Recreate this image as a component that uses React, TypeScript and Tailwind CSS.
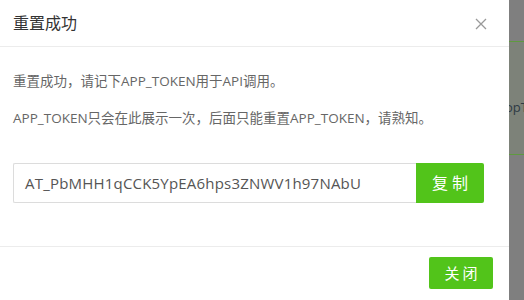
import React from "react";

const App = () => {
  const token = "AT_PbMHH1qCCK5YpEA6hps3ZNWV1h97NAbU";

  return (
    <div
      className="flex w-[524px] h-[300px] overflow-hidden bg-white"
      style={{ fontFamily: '"Open Sans", "Noto Sans CJK SC", sans-serif' }}
    >
      {/* modal */}
      <div className="w-[509px] shrink-0 flex flex-col bg-white">
        <div className="h-[47px] flex items-center justify-between pl-[13px] pr-[22px] border-b border-[#ececec]">
          <span className="text-[16px] text-[#333]">重置成功</span>
          <svg width="12" height="12" viewBox="0 0 12 12" className="mt-[1px]">
            <path d="M1 1 L11 11 M11 1 L1 11" stroke="#999" strokeWidth="1.3" />
          </svg>
        </div>

        <div className="h-[200px] pl-[13px] pt-[24px] border-b border-[#ececec]">
          <div className="text-[13.5px] leading-[20px] text-[#666]">
            <p>重置成功，请记下APP_TOKEN用于API调用。</p>
            <p className="mt-[17px]">APP_TOKEN只会在此展示一次，后面只能重置APP_TOKEN，请熟知。</p>
          </div>
          <div className="flex mt-[35px] w-[471px] h-[40px]">
            <div className="flex-1 flex items-center border border-[#dcdcdc] border-r-0 rounded-l-[2px] pl-[11px] text-[15px] text-[#555] tracking-[0.2px]">
              {token}
            </div>
            <button className="w-[68px] bg-[#52c41a] text-white text-[16px] tracking-[4px] pl-[4px] rounded-r-[2px]">
              复制
            </button>
          </div>
        </div>

        <div className="flex justify-end pr-[16px] pt-[10px]">
          <button className="w-[64px] h-[32px] bg-[#52c41a] text-white text-[15px] tracking-[3px] pl-[3px] rounded-[2px]">
            关闭
          </button>
        </div>
      </div>

      {/* page behind overlay */}
      <div className="flex-1 flex flex-col bg-[#7f7f7f] overflow-hidden">
        <div className="h-[41px]" />
        <div className="h-[114px] bg-[#7d8279] border-y border-[#5f9a3f] pt-[55px]">
          <span className="block -ml-[4px] text-[13px] leading-[20px] text-[#2d3a44] whitespace-nowrap">opT</span>
        </div>
      </div>
    </div>
  );
};

export default App;
